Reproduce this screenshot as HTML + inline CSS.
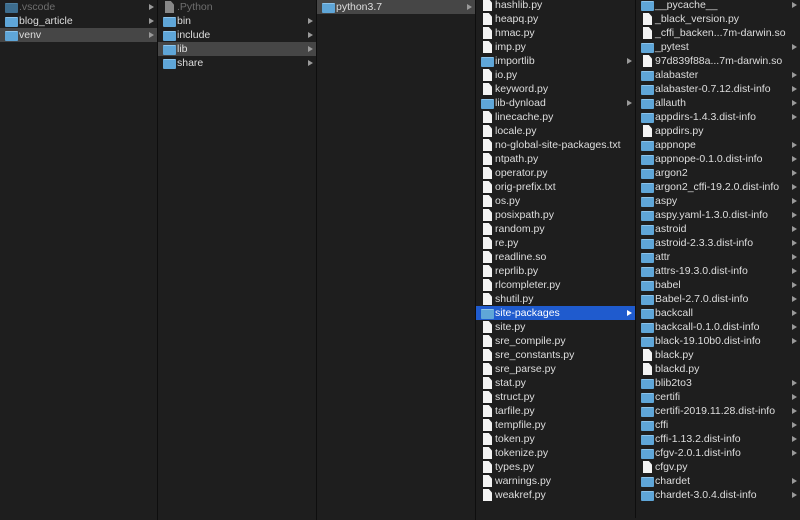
<!DOCTYPE html><html><head><meta charset="utf-8"><style>
body{margin:0;width:800px;height:500px;background:#1e1e1e;overflow:hidden;font-family:"Liberation Sans",sans-serif;font-size:10.5px;color:#dedede}
.c{position:absolute;top:-2px;height:520px;border-right:1px solid #0e0e0e;overflow:hidden}
.c div{height:14px;line-height:14px;position:relative;padding-left:19px;white-space:nowrap}
.d::before{content:"";position:absolute;left:5px;top:3px;width:13px;height:9px;background:#5fa6d8;border-radius:1px;border-top:1px solid #8cc3ea}
.d::after{content:"";position:absolute;right:3px;top:4px;border-left:5px solid #9a9a9a;border-top:3px solid transparent;border-bottom:3px solid transparent}
.f::before{content:"";position:absolute;left:7px;top:1px;width:9px;height:12px;background:#f4f4f4;clip-path:polygon(0 0,65% 0,100% 30%,100% 100%,0 100%)}
.g{background:#464646}.b{background:#1f5bce;color:#fff}.b::after{border-left-color:#fff}
.x{color:#6e6e6e}.x.d::before{background:#3d6d8e;border-top-color:#4f7f9f}.x.f::before{background:#888}
</style></head><body>
<div class="c" style="left:0;width:157px;top:0"><div class="d x">.vscode</div><div class="d">blog_article</div><div class="d g">venv</div></div>
<div class="c" style="left:158px;width:158px;top:0"><div class="f x">.Python</div><div class="d">bin</div><div class="d">include</div><div class="d g">lib</div><div class="d">share</div></div>
<div class="c" style="left:317px;width:158px;top:0"><div class="d g">python3.7</div></div>
<div class="c" style="left:476px;width:159px"><div class="f">hashlib.py</div><div class="f">heapq.py</div><div class="f">hmac.py</div><div class="f">imp.py</div><div class="d">importlib</div><div class="f">io.py</div><div class="f">keyword.py</div><div class="d">lib-dynload</div><div class="f">linecache.py</div><div class="f">locale.py</div><div class="f">no-global-site-packages.txt</div><div class="f">ntpath.py</div><div class="f">operator.py</div><div class="f">orig-prefix.txt</div><div class="f">os.py</div><div class="f">posixpath.py</div><div class="f">random.py</div><div class="f">re.py</div><div class="f">readline.so</div><div class="f">reprlib.py</div><div class="f">rlcompleter.py</div><div class="f">shutil.py</div><div class="d b">site-packages</div><div class="f">site.py</div><div class="f">sre_compile.py</div><div class="f">sre_constants.py</div><div class="f">sre_parse.py</div><div class="f">stat.py</div><div class="f">struct.py</div><div class="f">tarfile.py</div><div class="f">tempfile.py</div><div class="f">token.py</div><div class="f">tokenize.py</div><div class="f">types.py</div><div class="f">warnings.py</div><div class="f">weakref.py</div></div>
<div class="c" style="left:636px;width:164px;border:0"><div class="d">__pycache__</div><div class="f">_black_version.py</div><div class="f">_cffi_backen...7m-darwin.so</div><div class="d">_pytest</div><div class="f">97d839f88a...7m-darwin.so</div><div class="d">alabaster</div><div class="d">alabaster-0.7.12.dist-info</div><div class="d">allauth</div><div class="d">appdirs-1.4.3.dist-info</div><div class="f">appdirs.py</div><div class="d">appnope</div><div class="d">appnope-0.1.0.dist-info</div><div class="d">argon2</div><div class="d">argon2_cffi-19.2.0.dist-info</div><div class="d">aspy</div><div class="d">aspy.yaml-1.3.0.dist-info</div><div class="d">astroid</div><div class="d">astroid-2.3.3.dist-info</div><div class="d">attr</div><div class="d">attrs-19.3.0.dist-info</div><div class="d">babel</div><div class="d">Babel-2.7.0.dist-info</div><div class="d">backcall</div><div class="d">backcall-0.1.0.dist-info</div><div class="d">black-19.10b0.dist-info</div><div class="f">black.py</div><div class="f">blackd.py</div><div class="d">blib2to3</div><div class="d">certifi</div><div class="d">certifi-2019.11.28.dist-info</div><div class="d">cffi</div><div class="d">cffi-1.13.2.dist-info</div><div class="d">cfgv-2.0.1.dist-info</div><div class="f">cfgv.py</div><div class="d">chardet</div><div class="d">chardet-3.0.4.dist-info</div></div>
</body></html>
